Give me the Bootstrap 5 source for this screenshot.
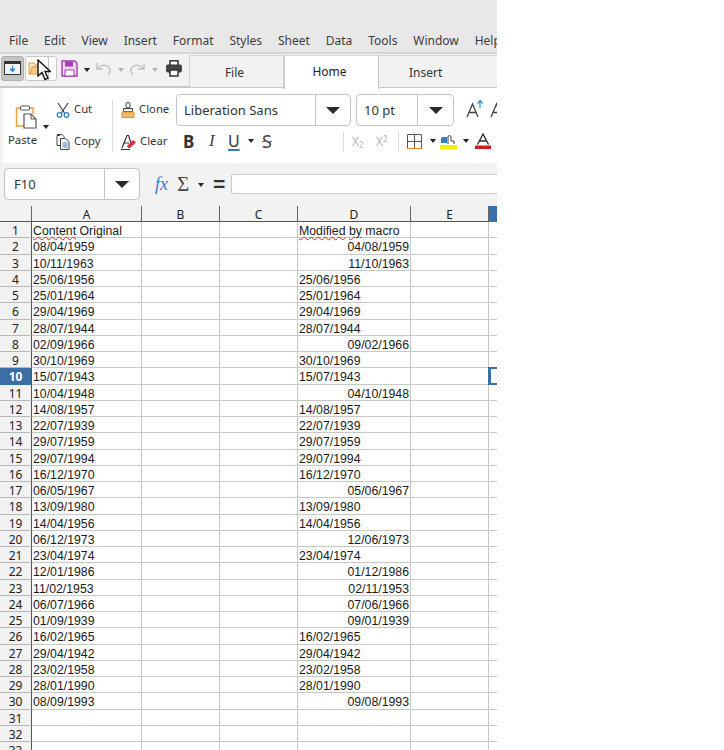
<!DOCTYPE html>
<html lang="en"><head><meta charset="utf-8"><title>Calc</title>
<link href="https://cdn.jsdelivr.net/npm/bootstrap@5.3.0/dist/css/bootstrap.min.css" rel="stylesheet">
<style>
html,body{margin:0;background:#fff}
.appwin{width:497px;height:750px;overflow:hidden;position:relative;font-family:"Noto Sans",sans-serif;color:#333;background:#f2f2f2}
.topband{height:29px;background:#e8e8e8}
.menubar{height:25px;background:#e8e8e8;border-bottom:2px solid #d6d6d6;padding-left:9px;gap:15.9px;font-size:12px;white-space:nowrap;color:#3c3c3c;align-items:center}
.tbrow{height:34px;background:#f2f2f2;border-bottom:2px solid #c8c8c8;position:relative}
.tbtools{width:189px;flex:none;padding-left:1px;align-items:flex-start;padding-top:2px}
.tbbtn{height:25px;display:flex;align-items:center;justify-content:center;flex:none;border-radius:3px}
.tbon{width:23px;background:#c4c4c4;border:1px solid #b0b0b0}
.tbopen{width:32px;margin-left:1px;background:#fff;border:1px solid #c8c8c8;justify-content:flex-start;padding-left:2px;position:relative}
.tbopen i{position:absolute;left:22px;top:0;bottom:0;border-left:1px solid #c8c8c8}
.tri{display:inline-block;width:0;height:0;border-left:3.5px solid transparent;border-right:3.5px solid transparent;border-top:4px solid #222;flex:none}
.trig{border-top-color:#b4b4b4}
.trib{border-left-width:7px;border-right-width:7px;border-top-width:7px;border-top-color:#2a2a2a}
.rtab{width:95px;height:32px;margin-top:1px;border:1px solid #d4d4d4;border-bottom:0;font-size:12px;display:flex;align-items:center;justify-content:center;background:#f2f2f2;color:#333;flex:none;padding:2px 4px 0 0}
.rtabon{height:34px;background:#fff;border:1px solid #c8c8c8;border-bottom:0;border-top-color:#d8d8d8;color:#222;padding:0 4px 2px 0;position:relative}
.rtabend{flex:1 1 auto;border-right:0;width:auto;justify-content:flex-start;padding-left:30px;border-left:0}
.ribbon{height:75px;margin-left:3px;background:#fff;font-size:11.3px;color:#333;white-space:nowrap}
.pastegrp{width:53px;flex:none;position:relative;padding-top:17px;padding-left:12px}
.pastegrp .pl{position:absolute;left:5px;top:44px;line-height:16px}
.pastegrp .tri{position:absolute;left:40px;top:37px}
.smcol{flex:none;padding-top:13px;gap:14px}
.smrow{height:18px;display:flex;align-items:center;gap:4px}
.smrow span{padding-bottom:2px}
.gap2{gap:3px}
.vdiv{width:1px;background:#dcdcdc;flex:none}
.fontcol{padding-top:6px;flex:1 1 auto;min-width:0}
.combo{height:32px;background:#fff;border:1px solid #c4c4c4;border-radius:4px;display:flex;flex:none;font-size:13px;color:#333;align-items:stretch}
.combo b{font-weight:400;flex:1 1 auto;padding-left:7px;line-height:30px}
.combo span{border-left:1px solid #c4c4c4;display:flex;align-items:center;justify-content:center;flex:none}
.cfont{width:175px}.cfont span{width:35px}
.csize{width:98px;margin-left:5px}.csize span{width:36px}
.cname{width:136px;height:32px}.cname span{width:35px}
.fmtrow{height:26px;margin-top:2px;align-items:center;position:relative;width:330px;padding-left:7px}
.fbar{height:43px;padding:5px 0 0 4px;background:#f2f2f2;position:relative}
.fbar .fx{font-family:"Liberation Serif",serif;font-style:italic;color:#2f7fc8;font-size:18px;margin-left:15px;width:22px;line-height:32px}
.fbar .sig{font-family:"Liberation Serif",serif;font-size:21px;line-height:32px;color:#444;width:15px}
.fbar .eq{font-weight:700;font-size:21px;line-height:32px;color:#333;margin-left:9px;font-family:"Liberation Sans",sans-serif;width:18px}
.finput{height:20px;margin-top:6px;background:#fff;border:1px solid #c8c8c8;border-right:0;flex:1 1 auto;border-radius:2px 0 0 2px}
.sheet{background:#fff;position:relative}
.hdr{height:16px;width:497px;display:flex;background:#f2f2f2;border-bottom:1px solid #555}
.hc{flex:none;height:16px;text-align:center;font-size:12px;line-height:17px;border-right:1px solid #666;color:#222;font-family:"Noto Sans",sans-serif}
.srow{height:16.25px;display:flex;width:497px}
.rh{width:32px;flex:none;background:#f2f2f2;text-align:center;font-size:12px;line-height:17px;border-right:1px solid #555;border-bottom:1px solid #b8b8b8;color:#222;overflow:hidden}
.hh{width:32px}
.cell{flex:none;border-right:1px solid #c8c8c8;border-bottom:1px solid #c8c8c8;font-family:"Liberation Sans",sans-serif;font-size:12.3px;line-height:18.5px;height:16.25px;padding:0 1px 0 1px;color:#1a1a1a;white-space:nowrap}
.ca{width:110px}.cb{width:78px}.cc{width:78px}.cd{width:113px}.ce{width:78px}.cf{width:8px;padding:0;border-right:0;position:relative}
.rt{text-align:right}
.sel{background:#3b6ea5;color:#fff;border-right-color:#3b6ea5}
.hf{width:8px;border-right:0}
.rh.sel{font-weight:700;border-bottom-color:#3b6ea5;border-right-color:#555}
.cursel{position:absolute;left:-1px;right:0;top:-1px;bottom:-1px;border:2px solid #3b6ea5;border-left-width:3px;border-right:0;background:#fff}
.sq{text-decoration:underline wavy #d8232a 1px;text-underline-offset:1px}
.ptr{position:absolute;left:37px;top:5px}
.gb{font:700 17px "Noto Sans",sans-serif;color:#333;width:25px}
.gi{font:italic 400 17px "Liberation Serif",serif;color:#444;width:20px;padding-left:1px}
.gu{font:400 16px "Noto Sans",sans-serif;color:#333;width:20px;text-decoration:underline #2f7fc8 1.5px;text-underline-offset:2px}
.gs{font:400 18px "Noto Sans",sans-serif;color:#444;text-decoration:line-through #2f7fc8 1px;width:13px;margin-left:2px}
.gx{font:12px "Noto Sans",sans-serif;color:#b8b8b8}
.gx sub,.gx sup{font-size:8px}
</style></head><body>
<div class="appwin">
 <div class="topband"></div>
 <div class="menubar d-flex"><span>File</span><span>Edit</span><span>View</span><span>Insert</span><span>Format</span><span>Styles</span><span>Sheet</span><span>Data</span><span>Tools</span><span>Window</span><span>Help</span></div>
 <div class="tbrow d-flex">
  <div class="tbtools d-flex">
   <div class="tbbtn tbon"><svg width="17" height="15" viewBox="0 0 17 15"><rect x=".5" y=".5" width="16" height="13" fill="#f4f4f4" stroke="#333"/><rect x="0" y="0" width="17" height="3" fill="#333"/><path d="M8.500 4.500v5M6 8l2.500 3L11 8z" fill="#2f8fe0" stroke="#2f8fe0"/></svg></div>
   <div class="tbbtn tbopen"><svg width="18" height="15" viewBox="0 0 18 15"><path d="M1 2h5l2 2h7v2H5L2 13H1z" fill="#fbe3bd" stroke="#e8963a"/><path d="M4.500 6H17l-3 7H1.500z" fill="#f9c98a" stroke="#e8963a"/></svg><i></i></div>
   <span class="tri" style="margin:11px 0 0 -7px"></span>
   <svg style="margin:4px 0 0 5px;flex:none" width="17" height="17" viewBox="0 0 17 17"><path d="M1 1h13l2 2v13H1z" fill="#e9d6ee" stroke="#a23fb0" stroke-width="1.400"/><rect x="4" y="1.500" width="8" height="5" fill="#a23fb0"/><rect x="4" y="10" width="9" height="6" fill="#fff" stroke="#a23fb0"/></svg>
   <span class="tri" style="margin:12px 0 0 6px"></span>
   <svg style="margin:5px 0 0 6px;flex:none" width="16" height="16" viewBox="0 0 16 16" fill="none" stroke="#bdbdbd" stroke-width="1.300"><path d="M1 2v6h6"/><path d="M1.500 7.500C4 4 9 3 12.500 6c2.500 2.200 2 5.500-.5 8"/></svg>
   <span class="tri trig" style="margin:12px 0 0 6px"></span>
   <svg style="margin:5px 0 0 5px;flex:none" width="16" height="16" viewBox="0 0 16 16" fill="none" stroke="#bdbdbd" stroke-width="1.300"><path d="M15 2v6H9"/><path d="M14.500 7.500C12 4 7 3 3.500 6c-2.500 2.200-2 5.500.5 8"/></svg>
   <span class="tri trig" style="margin:12px 0 0 7px"></span>
   <svg style="margin:4px 0 0 8px;flex:none" width="16" height="17" viewBox="0 0 16 17"><rect x="4" y=".8" width="8" height="5" fill="#fff" stroke="#333" stroke-width="1.500"/><rect x=".7" y="5" width="14.600" height="7" rx="1" fill="#444" stroke="#333"/><rect x="4" y="10" width="8" height="6" fill="#fff" stroke="#333" stroke-width="1.500"/></svg>
  </div>
  <div class="rtab">File</div><div class="rtab rtabon">Home</div><div class="rtab rtabend">Insert</div>
  <svg class="ptr" width="14" height="22" viewBox="0 0 14 22"><path d="M1 1v16l4-3.500 3 7 3-1.300-3-6.700h5.500z" fill="#fff" stroke="#111" stroke-width="1.400"/></svg>
 </div>
 <div class="ribbon d-flex">
  <div class="pastegrp">
   <svg width="22" height="24" viewBox="0 0 22 24"><path d="M7 3H1.500v18H9" fill="none" stroke="#ee9a3c" stroke-width="1.400"/><path d="M13 3h5v6" fill="none" stroke="#ee9a3c" stroke-width="1.400"/><rect x="5.500" y="1" width="9" height="4" rx="1" fill="#fff" stroke="#555"/><path d="M9 9h7l5 5v9H9z" fill="#fff" stroke="#555" stroke-width="1.200"/><path d="M16 9v5h5" fill="none" stroke="#555"/></svg>
   <span class="pl">Paste</span><span class="tri"></span>
  </div>
  <div class="smcol d-flex flex-column" style="width:56px">
   <div class="smrow"><svg width="14" height="16" viewBox="0 0 14 16" fill="none"><path d="M2 1l6.500 10M12 1L5.500 11" stroke="#444" stroke-width="1.200"/><circle cx="3.500" cy="13" r="2.300" stroke="#2f7fc8" stroke-width="1.300"/><circle cx="10.500" cy="13" r="2.300" stroke="#2f7fc8" stroke-width="1.300"/></svg><span>Cut</span></div>
   <div class="smrow"><svg width="14" height="16" viewBox="0 0 14 16" fill="none" stroke="#444"><path d="M4 1.500H1v10h3"/><path d="M1 .5h5l2 2v1"/><path d="M4.500 4.500h5l3.500 3v8H4.500z" fill="#fff"/><path d="M6.500 9h5M6.500 11h5M6.500 13h5" stroke="#2f7fc8"/></svg><span>Copy</span></div>
  </div>
  <div class="vdiv" style="height:53px;margin:11px 8px 0 0"></div>
  <div class="smcol d-flex flex-column" style="width:55px">
   <div class="smrow"><svg width="14" height="16" viewBox="0 0 14 16"><rect x="5" y=".8" width="4" height="5" rx="1" fill="none" stroke="#444"/><path d="M2.500 6.500h9v3h-9z" fill="#fff" stroke="#444"/><path d="M1 10h12v5.500H1z" fill="#f2b866" stroke="#e0912f"/></svg><span>Clone</span></div>
   <div class="smrow gap2"><svg width="16" height="16" viewBox="0 0 16 16"><path d="M1 14L6 1.500h1.500L10 9" fill="none" stroke="#333" stroke-width="1.200"/><path d="M3 9h5" stroke="#333"/><path d="M6 12l6-6 3 2.500-6 5.500H7z" fill="#e0303a"/><path d="M0 15.500h9" stroke="#333"/></svg><span>Clear</span></div>
  </div>
  <div class="d-flex flex-column fontcol">
   <div class="d-flex" style="width:330px">
    <div class="combo cfont"><b>Liberation Sans</b><span><i class="tri trib"></i></span></div>
    <div class="combo csize"><b>10 pt</b><span><i class="tri trib"></i></span></div>
    <svg style="margin:5px 0 0 12px;flex:none" width="18" height="20" viewBox="0 0 18 20" fill="none"><path d="M1 18L6.500 5 12 18M3 13.500h7" stroke="#444" stroke-width="1.300"/><path d="M14 9V2M11.500 4.500L14 1.500l2.500 3" stroke="#2f8fe0" stroke-width="1.200"/></svg>
    <svg style="margin:5px 0 0 6px;flex:none" width="18" height="20" viewBox="0 0 18 20" fill="none"><path d="M1 18L6.500 5 12 18M3 13.500h7" stroke="#444" stroke-width="1.300"/></svg>
   </div>
   <div class="fmtrow d-flex">
    <span class="gb">B</span>
    <span class="gi">I</span>
    <span class="gu">U</span>
    <span class="tri" style="margin-right:6px"></span>
    <span class="gs">S</span>
    <span class="vdiv" style="height:21px;margin-left:68px"></span>
    <span class="gx" style="margin-left:8px;width:24px">X<sub>2</sub></span>
    <span class="gx" style="width:22px">X<sup>2</sup></span>
    <span class="vdiv" style="height:21px"></span>
    <svg style="margin-left:8px;flex:none" width="15" height="15" viewBox="0 0 15 15" fill="none"><path d="M.5.500h14v14H.500zM7.500.5v14M.5 7.500h14" stroke="#555"/><path d="M0 14.500h15" stroke="#ee8a2c"/></svg>
    <span class="tri ms-2"></span>
    <svg class="ms-1" style="flex:none" width="17" height="15" viewBox="0 0 17 15"><rect x="0" y="11" width="17" height="4" fill="#f6ee00"/><path d="M1 9V5a2 2 0 012-2h4v6z" fill="#2f7fc8"/><path d="M8 10V3a1.500 1.500 0 013 0v4h3v3" fill="#fff" stroke="#444"/></svg>
    <span class="tri" style="margin-left:6px"></span>
    <svg style="margin-left:6px;flex:none" width="16" height="16" viewBox="0 0 16 16"><path d="M2.500 11.500L8 1l5.500 10.500M4.500 8h7" fill="none" stroke="#333" stroke-width="1.400"/><rect x="0" y="12.500" width="16" height="3.500" fill="#c9211e"/></svg>
   </div>
  </div>
 </div>
 <div class="fbar d-flex">
  <div class="combo cname"><b style="padding-left:9px">F10</b><span><i class="tri trib"></i></span></div>
  <span class="fx">fx</span><span class="sig">Σ</span><span class="tri" style="margin:15px 0 0 6px"></span><span class="eq">=</span>
  <div class="finput"></div>
 </div>
 <div class="sheet">
  <div class="hdr"><div class="hc hh"></div><div class="hc ca">A</div><div class="hc cb">B</div><div class="hc cc">C</div><div class="hc cd">D</div><div class="hc ce">E</div><div class="hc hf sel"></div></div>
  <div class="srow"><div class="rh">1</div><div class="cell ca"><span class="sq">Content</span> Original</div><div class="cell cb"></div><div class="cell cc"></div><div class="cell cd"><span class="sq">Modified</span> <span class="sq">by</span> macro</div><div class="cell ce"></div><div class="cell cf"></div></div>
  <div class="srow"><div class="rh">2</div><div class="cell ca">08/04/1959</div><div class="cell cb"></div><div class="cell cc"></div><div class="cell cd rt">04/08/1959</div><div class="cell ce"></div><div class="cell cf"></div></div>
  <div class="srow"><div class="rh">3</div><div class="cell ca">10/11/1963</div><div class="cell cb"></div><div class="cell cc"></div><div class="cell cd rt">11/10/1963</div><div class="cell ce"></div><div class="cell cf"></div></div>
  <div class="srow"><div class="rh">4</div><div class="cell ca">25/06/1956</div><div class="cell cb"></div><div class="cell cc"></div><div class="cell cd">25/06/1956</div><div class="cell ce"></div><div class="cell cf"></div></div>
  <div class="srow"><div class="rh">5</div><div class="cell ca">25/01/1964</div><div class="cell cb"></div><div class="cell cc"></div><div class="cell cd">25/01/1964</div><div class="cell ce"></div><div class="cell cf"></div></div>
  <div class="srow"><div class="rh">6</div><div class="cell ca">29/04/1969</div><div class="cell cb"></div><div class="cell cc"></div><div class="cell cd">29/04/1969</div><div class="cell ce"></div><div class="cell cf"></div></div>
  <div class="srow"><div class="rh">7</div><div class="cell ca">28/07/1944</div><div class="cell cb"></div><div class="cell cc"></div><div class="cell cd">28/07/1944</div><div class="cell ce"></div><div class="cell cf"></div></div>
  <div class="srow"><div class="rh">8</div><div class="cell ca">02/09/1966</div><div class="cell cb"></div><div class="cell cc"></div><div class="cell cd rt">09/02/1966</div><div class="cell ce"></div><div class="cell cf"></div></div>
  <div class="srow"><div class="rh">9</div><div class="cell ca">30/10/1969</div><div class="cell cb"></div><div class="cell cc"></div><div class="cell cd">30/10/1969</div><div class="cell ce"></div><div class="cell cf"></div></div>
  <div class="srow"><div class="rh sel">10</div><div class="cell ca">15/07/1943</div><div class="cell cb"></div><div class="cell cc"></div><div class="cell cd">15/07/1943</div><div class="cell ce"></div><div class="cell cf"><div class="cursel"></div></div></div>
  <div class="srow"><div class="rh">11</div><div class="cell ca">10/04/1948</div><div class="cell cb"></div><div class="cell cc"></div><div class="cell cd rt">04/10/1948</div><div class="cell ce"></div><div class="cell cf"></div></div>
  <div class="srow"><div class="rh">12</div><div class="cell ca">14/08/1957</div><div class="cell cb"></div><div class="cell cc"></div><div class="cell cd">14/08/1957</div><div class="cell ce"></div><div class="cell cf"></div></div>
  <div class="srow"><div class="rh">13</div><div class="cell ca">22/07/1939</div><div class="cell cb"></div><div class="cell cc"></div><div class="cell cd">22/07/1939</div><div class="cell ce"></div><div class="cell cf"></div></div>
  <div class="srow"><div class="rh">14</div><div class="cell ca">29/07/1959</div><div class="cell cb"></div><div class="cell cc"></div><div class="cell cd">29/07/1959</div><div class="cell ce"></div><div class="cell cf"></div></div>
  <div class="srow"><div class="rh">15</div><div class="cell ca">29/07/1994</div><div class="cell cb"></div><div class="cell cc"></div><div class="cell cd">29/07/1994</div><div class="cell ce"></div><div class="cell cf"></div></div>
  <div class="srow"><div class="rh">16</div><div class="cell ca">16/12/1970</div><div class="cell cb"></div><div class="cell cc"></div><div class="cell cd">16/12/1970</div><div class="cell ce"></div><div class="cell cf"></div></div>
  <div class="srow"><div class="rh">17</div><div class="cell ca">06/05/1967</div><div class="cell cb"></div><div class="cell cc"></div><div class="cell cd rt">05/06/1967</div><div class="cell ce"></div><div class="cell cf"></div></div>
  <div class="srow"><div class="rh">18</div><div class="cell ca">13/09/1980</div><div class="cell cb"></div><div class="cell cc"></div><div class="cell cd">13/09/1980</div><div class="cell ce"></div><div class="cell cf"></div></div>
  <div class="srow"><div class="rh">19</div><div class="cell ca">14/04/1956</div><div class="cell cb"></div><div class="cell cc"></div><div class="cell cd">14/04/1956</div><div class="cell ce"></div><div class="cell cf"></div></div>
  <div class="srow"><div class="rh">20</div><div class="cell ca">06/12/1973</div><div class="cell cb"></div><div class="cell cc"></div><div class="cell cd rt">12/06/1973</div><div class="cell ce"></div><div class="cell cf"></div></div>
  <div class="srow"><div class="rh">21</div><div class="cell ca">23/04/1974</div><div class="cell cb"></div><div class="cell cc"></div><div class="cell cd">23/04/1974</div><div class="cell ce"></div><div class="cell cf"></div></div>
  <div class="srow"><div class="rh">22</div><div class="cell ca">12/01/1986</div><div class="cell cb"></div><div class="cell cc"></div><div class="cell cd rt">01/12/1986</div><div class="cell ce"></div><div class="cell cf"></div></div>
  <div class="srow"><div class="rh">23</div><div class="cell ca">11/02/1953</div><div class="cell cb"></div><div class="cell cc"></div><div class="cell cd rt">02/11/1953</div><div class="cell ce"></div><div class="cell cf"></div></div>
  <div class="srow"><div class="rh">24</div><div class="cell ca">06/07/1966</div><div class="cell cb"></div><div class="cell cc"></div><div class="cell cd rt">07/06/1966</div><div class="cell ce"></div><div class="cell cf"></div></div>
  <div class="srow"><div class="rh">25</div><div class="cell ca">01/09/1939</div><div class="cell cb"></div><div class="cell cc"></div><div class="cell cd rt">09/01/1939</div><div class="cell ce"></div><div class="cell cf"></div></div>
  <div class="srow"><div class="rh">26</div><div class="cell ca">16/02/1965</div><div class="cell cb"></div><div class="cell cc"></div><div class="cell cd">16/02/1965</div><div class="cell ce"></div><div class="cell cf"></div></div>
  <div class="srow"><div class="rh">27</div><div class="cell ca">29/04/1942</div><div class="cell cb"></div><div class="cell cc"></div><div class="cell cd">29/04/1942</div><div class="cell ce"></div><div class="cell cf"></div></div>
  <div class="srow"><div class="rh">28</div><div class="cell ca">23/02/1958</div><div class="cell cb"></div><div class="cell cc"></div><div class="cell cd">23/02/1958</div><div class="cell ce"></div><div class="cell cf"></div></div>
  <div class="srow"><div class="rh">29</div><div class="cell ca">28/01/1990</div><div class="cell cb"></div><div class="cell cc"></div><div class="cell cd">28/01/1990</div><div class="cell ce"></div><div class="cell cf"></div></div>
  <div class="srow"><div class="rh">30</div><div class="cell ca">08/09/1993</div><div class="cell cb"></div><div class="cell cc"></div><div class="cell cd rt">09/08/1993</div><div class="cell ce"></div><div class="cell cf"></div></div>
  <div class="srow"><div class="rh">31</div><div class="cell ca"></div><div class="cell cb"></div><div class="cell cc"></div><div class="cell cd"></div><div class="cell ce"></div><div class="cell cf"></div></div>
  <div class="srow"><div class="rh">32</div><div class="cell ca"></div><div class="cell cb"></div><div class="cell cc"></div><div class="cell cd"></div><div class="cell ce"></div><div class="cell cf"></div></div>
  <div class="srow"><div class="rh">33</div><div class="cell ca"></div><div class="cell cb"></div><div class="cell cc"></div><div class="cell cd"></div><div class="cell ce"></div><div class="cell cf"></div></div>
 </div>
</div>
<script src="https://cdn.jsdelivr.net/npm/bootstrap@5.3.0/dist/js/bootstrap.bundle.min.js"></script>
</body></html>
